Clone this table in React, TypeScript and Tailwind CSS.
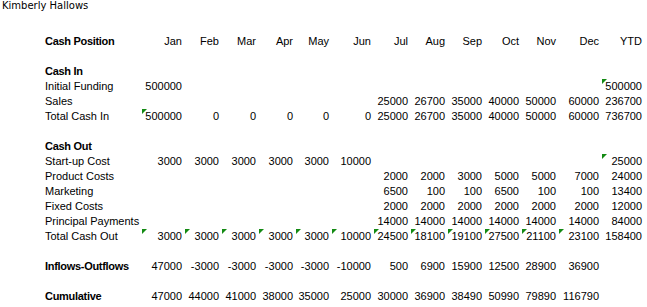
type Row = {
  label?: string;
  bold?: boolean;
  values?: (string | number | null)[];
  flags?: number[];
};

const MONTHS = [
  "Jan", "Feb", "Mar", "Apr", "May", "Jun",
  "Jul", "Aug", "Sep", "Oct", "Nov", "Dec", "YTD",
];

const _ = null;

// one entry per sheet row, null = blank row
const rows: (Row | null)[] = [
  { label: "Cash Position", bold: true, values: MONTHS },
  null,
  { label: "Cash In", bold: true },
  {
    label: "Initial Funding",
    values: [500000, _, _, _, _, _, _, _, _, _, _, _, 500000],
    flags: [12],
  },
  {
    label: "Sales",
    values: [_, _, _, _, _, _, 25000, 26700, 35000, 40000, 50000, 60000, 236700],
  },
  {
    label: "Total Cash In",
    values: [500000, 0, 0, 0, 0, 0, 25000, 26700, 35000, 40000, 50000, 60000, 736700],
    flags: [0],
  },
  null,
  { label: "Cash Out", bold: true },
  {
    label: "Start-up Cost",
    values: [3000, 3000, 3000, 3000, 3000, 10000, _, _, _, _, _, _, 25000],
    flags: [12],
  },
  {
    label: "Product Costs",
    values: [_, _, _, _, _, _, 2000, 2000, 3000, 5000, 5000, 7000, 24000],
  },
  {
    label: "Marketing",
    values: [_, _, _, _, _, _, 6500, 100, 100, 6500, 100, 100, 13400],
  },
  {
    label: "Fixed Costs",
    values: [_, _, _, _, _, _, 2000, 2000, 2000, 2000, 2000, 2000, 12000],
  },
  {
    label: "Principal Payments",
    values: [_, _, _, _, _, _, 14000, 14000, 14000, 14000, 14000, 14000, 84000],
  },
  {
    label: "Total Cash Out",
    values: [3000, 3000, 3000, 3000, 3000, 10000, 24500, 18100, 19100, 27500, 21100, 23100, 158400],
    flags: [0, 1, 2, 3, 4, 5, 6, 7, 8, 9, 10, 11],
  },
  null,
  {
    label: "Inflows-Outflows",
    bold: true,
    values: [47000, -3000, -3000, -3000, -3000, -10000, 500, 6900, 15900, 12500, 28900, 36900, _],
  },
  null,
  {
    label: "Cumulative",
    bold: true,
    values: [47000, 44000, 41000, 38000, 35000, 25000, 30000, 36900, 38490, 50990, 79890, 116790, _],
  },
];

function SheetRow({ row }: { row: Row | null }) {
  if (!row) {
    return <div className="h-[15px]"></div>;
  }

  return (
    <div className="grid h-[15px] grid-cols-[42px_100px_43px_37px_37px_37px_36px_42px_37px_37px_37px_37px_37px_43px_43px] leading-[15px]">
      <div></div>
      <div
        className={
          "whitespace-nowrap pl-[3px] " +
          (row.bold ? "font-bold tracking-[-0.3px]" : "")
        }
      >
        {row.label}
      </div>
      {MONTHS.map((m, i) => {
        const v = row.values ? row.values[i] : null;
        return (
          <div key={m} className="relative whitespace-nowrap pr-[3px] text-right">
            {row.flags && row.flags.includes(i) && (
              <span className="absolute left-0 top-0 h-0 w-0 border-r-[5px] border-t-[5px] border-r-transparent border-t-[#138a13]"></span>
            )}
            {v === null ? "" : v}
          </div>
        );
      })}
    </div>
  );
}

export default function App() {
  return (
    <div className="h-[307px] w-[647px] overflow-hidden bg-white text-black">
      <div className="h-[11px] pl-[2px] font-['DejaVu_Sans',sans-serif] text-[10px] leading-[11px]">
        Kimberly Hallows
      </div>
      <div className="mt-[23px] font-['Liberation_Sans',Arial,sans-serif] text-[11px]">
        {rows.map((row, i) => (
          <SheetRow key={i} row={row} />
        ))}
      </div>
    </div>
  );
}
